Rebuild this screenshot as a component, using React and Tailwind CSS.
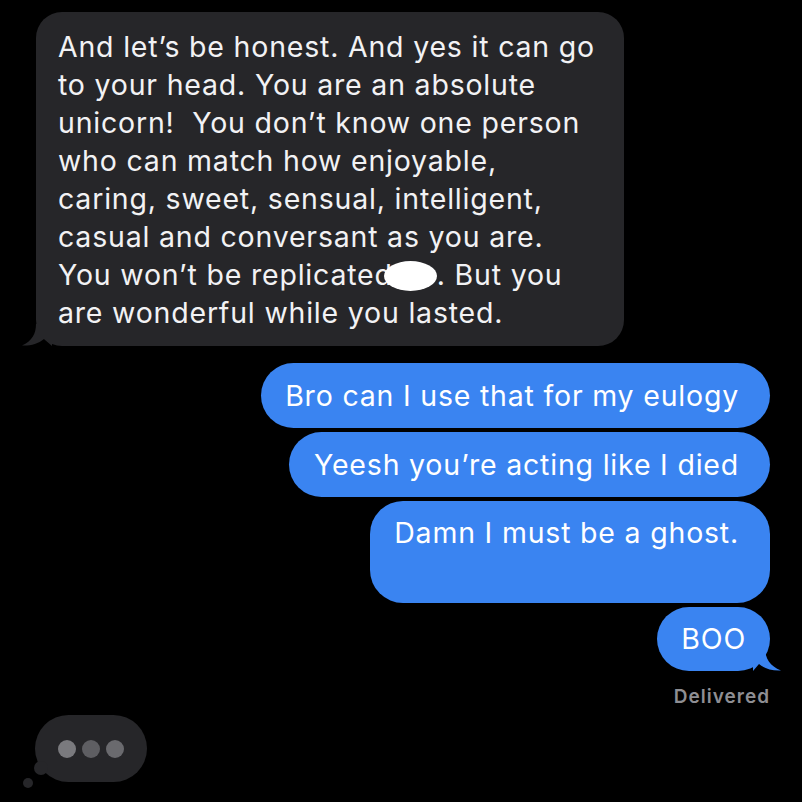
import React from 'react';

const font = { fontFamily: 'Inter, "Noto Sans", sans-serif' };

const OutgoingBubble = ({ children, className = '' }) => (
  <div className={`bg-[#3a84f1] text-white rounded-[33px] text-[28.5px] leading-[38px] tracking-[0.8px] ${className}`}>
    {children}
  </div>
);

export default function App() {
  return (
    <div className="w-[802px] h-[802px] bg-black overflow-hidden flex flex-col" style={font}>
      {/* incoming message */}
      <div className="relative ml-[36px] mt-[12px] w-[588px] bg-[#262629] rounded-[26px] pl-[22px] pr-[12px] pt-[16px] pb-[14px] text-[#f2f2f4] text-[28.5px] leading-[38px] tracking-[0.8px] whitespace-nowrap">
        And let’s be honest. And yes it can go<br />
        to your head. You are an absolute<br />
        unicorn!&nbsp; You don’t know one person<br />
        who can match how enjoyable,<br />
        caring, sweet, sensual, intelligent,<br />
        casual and conversant as you are.<br />
        You won’t be replicated
        <span className="inline-block align-middle -ml-[9px] w-[53px] h-[30px] bg-white rounded-[50%] -translate-y-[1px]" />
        . But you<br />
        are wonderful while you lasted.
        <svg className="absolute left-[-14px] bottom-0" width="30" height="22" viewBox="0 0 30 22">
          <path d="M14 0 C14 10 10 17 0 21.5 C8 22 16 20 22 15 L30 22 L30 0 Z" fill="#262629" />
        </svg>
      </div>

      {/* outgoing messages */}
      <div className="flex flex-col items-end gap-[4px] mr-[32px] mt-[17px]">
        <OutgoingBubble className="h-[65px] flex items-center pl-[24px] pr-[31px]">
          Bro can I use that for my eulogy
        </OutgoingBubble>
        <OutgoingBubble className="h-[65px] flex items-center pl-[25px] pr-[31px]">
          Yeesh you’re acting like I died
        </OutgoingBubble>
        <OutgoingBubble className="h-[102px] rounded-[30px] pl-[24px] pr-[31px] pt-[13px]">
          Damn I must be a ghost.
        </OutgoingBubble>
        <div className="relative">
          <OutgoingBubble className="h-[64px] flex items-center pl-[24px] pr-[24px]">
            BOO
          </OutgoingBubble>
          <svg className="absolute right-[-11px] bottom-0" width="28" height="24" viewBox="0 0 28 24">
            <path d="M12 0 C12 12 17 19 28 23.5 C19 24 11 21.5 6 17 L0 24 L0 0 Z" fill="#3a84f1" />
          </svg>
        </div>
        <div className="mt-[10px] text-[19px] font-semibold text-[#8e8e93] leading-[24px] tracking-[1px]">Delivered</div>
      </div>

      {/* typing indicator */}
      <div className="relative ml-[35px] mt-[6px] w-[112px] h-[67px] bg-[#262629] rounded-[34px] flex items-center justify-center gap-[6px]">
        <span className="w-[18px] h-[18px] rounded-full bg-[#7a7a7e]" />
        <span className="w-[18px] h-[18px] rounded-full bg-[#5e5e62]" />
        <span className="w-[18px] h-[18px] rounded-full bg-[#6a6a6e]" />
        <span className="absolute left-[-1px] top-[46px] w-[14px] h-[14px] rounded-full bg-[#262629]" />
        <span className="absolute left-[-12px] top-[63px] w-[10px] h-[10px] rounded-full bg-[#262629]" />
      </div>
    </div>
  );
}
